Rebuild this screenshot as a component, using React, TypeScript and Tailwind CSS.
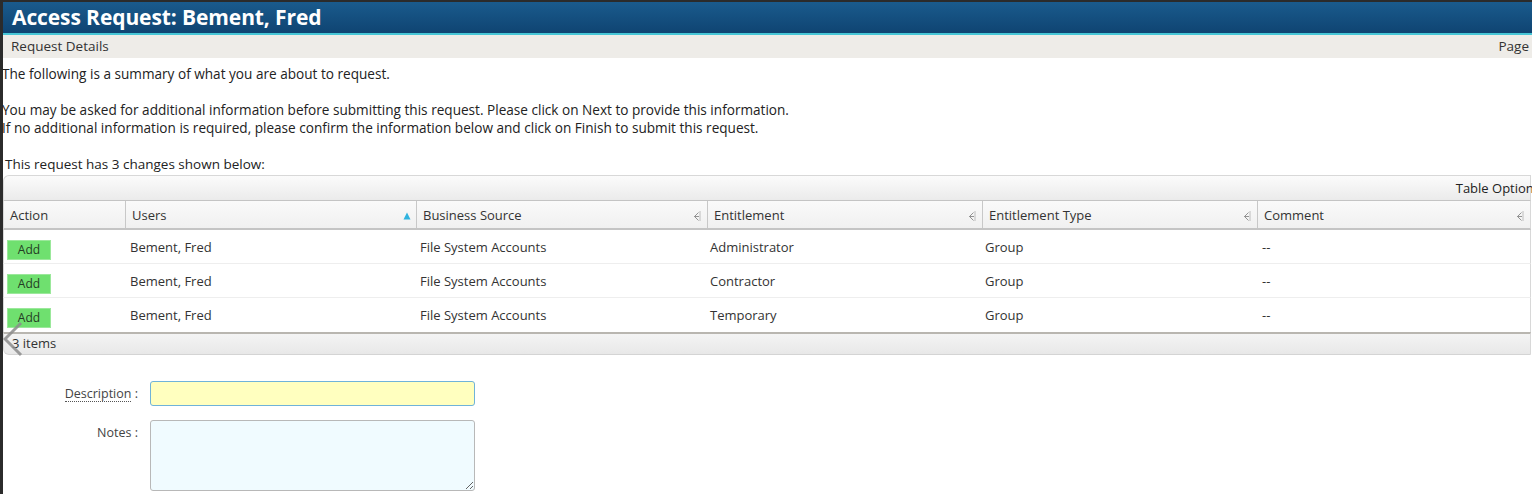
import React from 'react';

const font = { fontFamily: '"Open Sans", "Noto Sans", sans-serif' };

const columns = [
  { label: 'Action', width: 'w-[121px]', sort: 'none' },
  { label: 'Users', width: 'w-[291px]', sort: 'asc' },
  { label: 'Business Source', width: 'w-[291px]', sort: 'both' },
  { label: 'Entitlement', width: 'w-[275px]', sort: 'both' },
  { label: 'Entitlement Type', width: 'w-[275px]', sort: 'both' },
  { label: 'Comment', width: 'flex-1', sort: 'both' },
];

const rows = [
  { user: 'Bement, Fred', source: 'File System Accounts', ent: 'Administrator', type: 'Group', comment: '--' },
  { user: 'Bement, Fred', source: 'File System Accounts', ent: 'Contractor', type: 'Group', comment: '--' },
  { user: 'Bement, Fred', source: 'File System Accounts', ent: 'Temporary', type: 'Group', comment: '--' },
];

const SortIcon = ({ kind }: { kind: string }) => {
  if (kind === 'asc') {
    return (
      <svg width="8" height="8" viewBox="0 0 8 8" className="shrink-0">
        <path d="M4 0.5 L7.5 7.5 L0.5 7.5 Z" fill="#2fb3df" />
      </svg>
    );
  }
  if (kind === 'both') {
    return (
      <svg width="9" height="14" viewBox="0 0 9 14" className="shrink-0">
        <path d="M7 2 V12" stroke="#b0b0b0" strokeWidth="0.8" />
        <path d="M5.5 3.5 L1.5 7.5 L5.5 11.5" stroke="#7a7a7a" strokeWidth="0.8" fill="none" />
        <path d="M1.5 7.5 H6" stroke="#7a7a7a" strokeWidth="0.8" />
      </svg>
    );
  }
  return null;
};

export default function App() {
  return (
    <div className="w-[1532px] h-[494px] overflow-hidden bg-[#2b2b2b] pl-[3px] pt-[2px] text-[#222]" style={font}>
      <div className="relative h-full bg-white w-[1545px]">
        {/* title bar */}
        <div className="h-[33px] bg-gradient-to-b from-[#1a5b8d] to-[#0f4472] border-b-[2px] border-[#46c6d6] flex items-center pl-[9px]">
          <h1 className="text-[21px] font-bold text-white leading-none tracking-[-0.1px]">Access Request: Bement, Fred</h1>
        </div>

        {/* section bar */}
        <div className="h-[23px] bg-[#eeece8] flex items-center justify-between pl-[8px] pr-[19px] text-[13.5px] text-[#333]">
          <span>Request Details</span>
          <span>Page</span>
        </div>

        <div className="text-[13.6px] leading-[18px] pt-[7px] text-[#222]">
          <p className="-ml-[1px]">The following is a summary of what you are about to request.</p>
          <p className="mt-[18px] -ml-[1px]">You may be asked for additional information before submitting this request. Please click on Next to provide this information.</p>
          <p className="-ml-[1px]">If no additional information is required, please confirm the information below and click on Finish to submit this request.</p>
          <p className="mt-[18px] ml-[2px] text-[13.5px]">This request has 3 changes shown below:</p>
        </div>

        {/* table */}
        <div className="mt-[2px] w-[1528px]">
          <div className="h-[25px] rounded-tl-[6px] border border-b-0 border-[#d8d8d8] bg-gradient-to-b from-[#fbfbfb] to-[#ebebeb] flex items-end justify-end pb-[2px] text-[13px] text-[#222]">
            <span className="whitespace-nowrap -mr-[10px]">Table Options</span>
          </div>
          <div className="flex h-[30px] border-t border-b-2 border-[#c4c4c4] border-x border-x-[#d8d8d8] bg-gradient-to-b from-[#fafafa] to-[#f0f0f0] text-[13px] text-[#333]">
            {columns.map((c, i) => (
              <div
                key={c.label}
                className={`${c.width} flex items-center justify-between pl-[6px] pr-[5px] pt-[2px] ${i > 0 ? 'border-l border-[#c8c8c8]' : ''}`}
              >
                <span>{c.label}</span>
                <SortIcon kind={c.sort} />
              </div>
            ))}
          </div>
          {rows.map((r, i) => (
            <div
              key={i}
              className={`flex h-[34px] items-center pt-[2px] border-x border-[#d8d8d8] text-[13px] text-[#333] ${i < rows.length - 1 ? 'border-b border-b-[#eeeeee]' : ''}`}
            >
              <div className="w-[121px] pl-[3px] pt-[4px]">
                <span className="inline-flex items-center justify-center w-[44px] h-[20px] bg-[#6fe06f] border border-[#9be89b] text-[12px] text-[#243c24]">Add</span>
              </div>
              <div className="w-[291px] pl-[5px]">{r.user}</div>
              <div className="w-[291px] pl-[4px]">{r.source}</div>
              <div className="w-[275px] pl-[3px]">{r.ent}</div>
              <div className="w-[275px] pl-[3px]">{r.type}</div>
              <div className="flex-1 pl-[5px]">{r.comment}</div>
            </div>
          ))}
          <div className="h-[23px] rounded-bl-[6px] border-t-2 border-[#b9b6b0] border-x border-x-[#d8d8d8] border-b border-b-[#d4d4d4] bg-gradient-to-b from-[#f4f4f4] to-[#e8e8e8] flex items-center pl-[8px] text-[13px] text-[#333]">
            3 items
          </div>
        </div>

        {/* form */}
        <div className="mt-[26px] text-[12.5px] text-[#444]">
          <div className="flex items-start">
            <div className="w-[138px] text-right pr-[3px] pt-[4px]">
              <span className="border-b border-dotted border-[#555] leading-[14px] inline-block">Description</span> :
            </div>
            <input className="ml-[9px] w-[325px] h-[25px] rounded-[3px] bg-[#ffffbf] border border-[#6fb3d9] outline-none" />
          </div>
          <div className="flex items-start mt-[14px]">
            <div className="w-[138px] text-right pr-[3px] pt-[4px]">Notes :</div>
            <textarea className="ml-[9px] w-[325px] h-[71px] rounded-[3px] bg-[#f0fbff] border border-[#b8b8b8] outline-none resize-y" />
          </div>
        </div>

        {/* carousel back chevron overlay */}
        <svg className="absolute left-0 top-[318px]" width="22" height="38" viewBox="0 0 22 38">
          <path d="M18 3 L2 19 L18 35" stroke="#8c8c8c" strokeWidth="3" fill="none" strokeOpacity="0.85" />
        </svg>
      </div>
    </div>
  );
}
